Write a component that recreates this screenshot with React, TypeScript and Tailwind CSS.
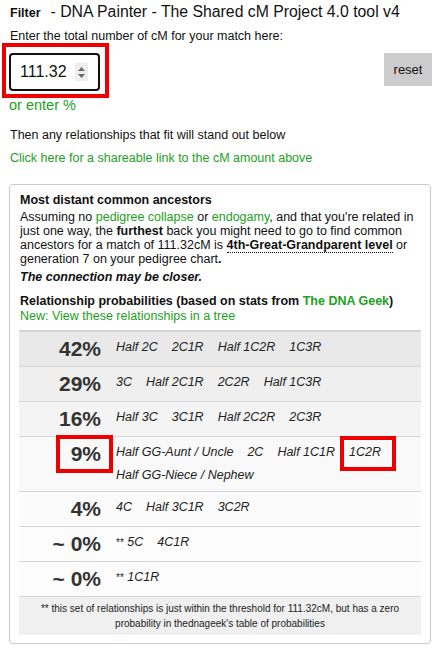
import React from "react";

type Row = {
  pct: string;
  names: string[];
  bg: string;
  marked?: boolean;
};

const rows: Row[] = [
  { pct: "42%", names: ["Half 2C", "2C1R", "Half 1C2R", "1C3R"], bg: "bg-[#e9e9e9]" },
  { pct: "29%", names: ["3C", "Half 2C1R", "2C2R", "Half 1C3R"], bg: "bg-[#efefef]" },
  { pct: "16%", names: ["Half 3C", "3C1R", "Half 2C2R", "2C3R"], bg: "bg-[#f4f4f4]" },
  {
    pct: "9%",
    names: ["Half GG-Aunt / Uncle", "2C", "Half 1C1R", "1C2R", "Half GG-Niece / Nephew"],
    bg: "bg-[#f9f9f9]",
    marked: true,
  },
  { pct: "4%", names: ["4C", "Half 3C1R", "3C2R"], bg: "bg-[#fbfbfb]" },
  { pct: "~ 0%", names: ["** 5C", "4C1R"], bg: "bg-[#fcfcfc]" },
  { pct: "~ 0%", names: ["** 1C1R"], bg: "bg-[#fcfcfc]" },
];

function Spinner() {
  return (
    <div className="flex h-[18px] w-[13px] flex-col items-center justify-center gap-[3px] bg-[#eeeeee]">
      <svg width="7" height="4" viewBox="0 0 7 4">
        <path d="M0 4 L3.5 0 L7 4 Z" fill="#6b6b6b" />
      </svg>
      <svg width="7" height="4" viewBox="0 0 7 4">
        <path d="M0 0 L3.5 4 L7 0 Z" fill="#6b6b6b" />
      </svg>
    </div>
  );
}

export default function App() {
  return (
    <div className="relative min-h-[650px] w-[440px] bg-white font-['Liberation_Sans',Arial,sans-serif] text-[12.5px] text-[#111]">
      {/* header */}
      <div className="flex items-baseline px-[10px] pt-[3px] leading-[18px]">
        <span className="text-[12.5px] font-bold">Filter</span>
        <span className="ml-[10px] text-[15.8px]">- DNA Painter - The Shared cM Project 4.0 tool v4</span>
      </div>
      <div className="mt-[7px] px-[10px] leading-[15px]">Enter the total number of cM for your match here:</div>

      <div className="mt-[9px] flex items-start justify-between pl-[9px] pr-[8px]">
        <div className="relative">
          <div className="flex h-[38px] w-[91px] items-center rounded-[4px] border-2 border-[#111] pl-[9px] pr-[10px]">
            <span className="flex-1 text-[16px] text-[#111]">111.32</span>
            <Spinner />
          </div>
          <div className="pointer-events-none absolute -bottom-[7px] -left-[7px] -right-[9px] -top-[10px] border-4 border-[#ee0000]" />
        </div>
        <button className="h-[33px] w-[48px] bg-[#cccccc] text-[13px] text-[#111]">reset</button>
      </div>

      <div className="mt-[5px] px-[9px] text-[14.5px] leading-[18px] text-[#22a022]">or enter %</div>

      <div className="mt-[14px] px-[10px] leading-[15px]">Then any relationships that fit will stand out below</div>
      <div className="mt-[8px] px-[10px] leading-[15px] text-[#22a022]">
        Click here for a shareable link to the cM amount above
      </div>

      {/* results box */}
      <div className="mx-[9px] mt-[18px] rounded-[4px] border border-[#cccccc] px-[9px] pb-[8px] pt-[7px]">
        <div className="px-[1px] font-bold leading-[16px]">Most distant common ancestors</div>
        <div className="mt-[2px] px-[1px] leading-[14px]">
          Assuming no <span className="text-[#22a022]">pedigree collapse</span> or{" "}
          <span className="text-[#22a022]">endogamy</span>, and that you're related in just one way, the{" "}
          <b>furthest</b> back you might need to go to find common ancestors for a match of 111.32cM is{" "}
          <b className="border-b border-dotted border-[#111]">4th-Great-Grandparent level</b> or generation 7 on your
          pedigree chart<b>.</b>
        </div>
        <div className="mt-[4px] px-[1px] font-bold italic leading-[15px]">The connection may be closer.</div>

        <div className="mt-[9px] px-[1px] font-bold leading-[15px]">
          Relationship probabilities (based on stats from <span className="text-[#22a022]">The DNA Geek</span>)
        </div>
        <div className="px-[1px] leading-[15px] text-[#22a022]">New: View these relationships in a tree</div>

        <div className="mt-[6px] border-t-2 border-[#d4d4d4]">
          {rows.map((r, i) => (
            <div key={i} className={`flex items-start border-b border-[#d6d6d6] pb-[4px] pt-[4px] ${r.bg}`}>
              <div className="w-[82px] shrink-0 text-right text-[21px] font-bold leading-[26px] text-[#333]">
                <span className="relative">
                  {r.pct}
                  {r.marked && (
                    <span className="pointer-events-none absolute -bottom-[8px] -left-[15px] -right-[12px] -top-[7px] border-4 border-[#ee0000]" />
                  )}
                </span>
              </div>
              <div className="ml-[15px] flex flex-wrap gap-x-[14px] text-[12.5px] italic leading-[23px] text-[#222]">
                {r.names.map((n, j) => (
                  <span key={j} className="relative whitespace-nowrap">
                    {n.startsWith("** ") ? (
                      <>
                        <span className="not-italic text-[10px]">**</span> {n.slice(3)}
                      </>
                    ) : (
                      n
                    )}
                    {r.marked && n === "1C2R" && (
                      <span className="pointer-events-none absolute -bottom-[7px] -left-[9px] -right-[15px] -top-[5px] border-4 border-[#ee0000]" />
                    )}
                  </span>
                ))}
              </div>
            </div>
          ))}
          <div className="bg-[#f0f0f0] px-[10px] pb-[4px] pt-[4px] text-center text-[10px] leading-[15px] text-[#222]">
            ** this set of relationships is just within the threshold for 111.32cM, but has a zero probability in
            thednageek's table of probabilities
          </div>
        </div>
      </div>
    </div>
  );
}
